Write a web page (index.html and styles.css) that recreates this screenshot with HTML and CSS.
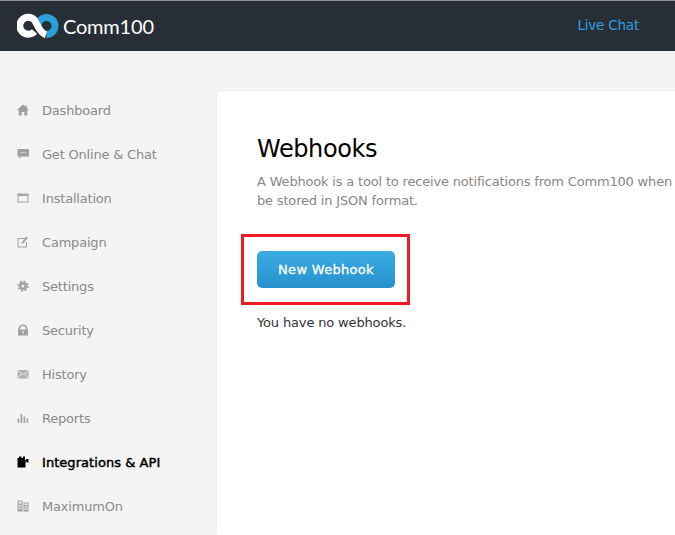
FILE: index.html
```html
<!DOCTYPE html>
<html lang="en">
<head>
<meta charset="utf-8">
<title>Webhooks</title>
<link rel="stylesheet" href="styles.css">
</head>
<body>
<header class="topbar">
  <div class="brand">
    <svg class="logo" width="42" height="26" viewBox="0 0 42 26" aria-hidden="true">
      <path d="M21 13A8.500 8.500 0 1 1 29.500 21.500" fill="none" stroke="#2a9fd8" stroke-width="7"/>
      <path d="M17.500 18.500A8.500 8.500 0 1 1 17.500 7C20 10.500 22 19.500 29 21.800" fill="none" stroke="#fff" stroke-width="7"/>
    </svg>
    <span class="wordmark">Comm100</span>
  </div>
  <a class="toplink">Live Chat</a>
</header>
<div class="layout">
  <nav class="sidebar">
    <a class="navitem"><svg class="ico" viewBox="0 0 12 12"><path d="M6 .5 0 6h1.700v5.500h3V8h2.600v3.500h3V6H12L10 4.200V1.500H8.500v1.300Z"/></svg>Dashboard</a>
    <a class="navitem"><svg class="ico" viewBox="0 0 12 12"><path d="M1 1h10.500a.5.5 0 0 1 .5.500v6.500a.5.5 0 0 1-.5.500H4.500L2.500 11V8.500H1a.5.5 0 0 1-.5-.5V1.500A.5.5 0 0 1 1 1Z"/><path d="M3.500 4h1v1h-1Zm2 0h1v1h-1Zm2 0h1v1h-1Z" fill="#f4f4f4"/></svg>Get Online &amp; Chat</a>
    <a class="navitem"><svg class="ico" viewBox="0 0 12 12"><path d="M.5 1.500h11v9H.5Zm1 2.500v5.500h9V4Z" fill-rule="evenodd"/><path d="M6 2.500h1v.6H6Zm1.800 0h1v.6h-1Zm1.800 0h1v.6h-1Z" fill="#f4f4f4"/></svg>Installation</a>
    <a class="navitem"><svg class="ico" viewBox="0 0 12 12"><path d="M.500 2h7.500v1H1.500v7.500H9V6h1v5.500H.500Z"/><path d="M4.500 8 5 6l4.500-5.500 1.500 1.200-4.500 5.500Z"/></svg>Campaign</a>
    <a class="navitem"><svg class="ico" viewBox="0 0 12 12"><path d="M6 2a4 4 0 1 0 0 8 4 4 0 0 0 0-8Zm0 2.500a1.500 1.500 0 1 1 0 3 1.500 1.500 0 0 1 0-3Z" fill-rule="evenodd"/><circle class="teeth" cx="6" cy="6" r="4.800"/></svg>Settings</a>
    <a class="navitem"><svg class="ico" viewBox="0 0 12 12"><path d="M1.500 5.500V4.500a4.500 4 0 0 1 9 0v1h.5V11.500H1V5.500Zm1.700 0h5.600V4.500a2.800 2.600 0 0 0-5.600 0Z" fill-rule="evenodd"/><path d="M5.200 7.200h1.600v1.200h-.4v1.400h-.8V8.400h-.4Z" fill="#f4f4f4"/></svg>Security</a>
    <a class="navitem"><svg class="ico soft" viewBox="0 0 12 12"><path d="M.5 2h11v8.500H.5Z"/><path d="m.8 2.600 5.200 4 5.200-4M1 10l3.300-4.300M11 10 7.700 5.700" fill="none" stroke="#f4f4f4" stroke-width=".8"/></svg>History</a>
    <a class="navitem"><svg class="ico" viewBox="0 0 12 12"><path d="M.5 6.500h1.700V11H.5Zm3-4.500h1.700v9H3.500Zm3 2.500h1.700V11H6.500Zm3 2h1.700V11H9.500Z"/></svg>Reports</a>
    <a class="navitem active"><svg class="ico" viewBox="0 0 12 12"><path d="M.5 2H2V.5h2.500V2h1.500V.5h2V4h1V3h2.500v3.500H9.500v-1h-1v6H.5Z"/></svg>Integrations &amp; API</a>
    <a class="navitem"><svg class="ico" viewBox="0 0 12 12"><path d="M.5.500h5V11.500h-5Zm1 1V3.500h3V1.500Zm0 3.200v1.700h1.200V4.700Zm1.800 0v1.700h1.200V4.700ZM1.500 7.500v1.700h1.200V7.500Zm1.800 0v1.700h1.200V7.500ZM6.500 2.500h5v9h-5Zm1 1V5h3V3.500Zm0 2.700v1.500h1.200V6.200Zm1.800 0v1.500h1.200V6.200ZM7.500 8.500v1.500h1.200V8.500Zm1.800 0v1.500h1.200V8.500Z" fill-rule="evenodd"/></svg>MaximumOn</a>
  </nav>
  <main class="panel">
    <h1 class="title">Webhooks</h1>
    <p class="intro">A Webhook is a tool to receive notifications from Comm100 when<br>be stored in JSON format.</p>
    <div class="highlight"><button class="primary">New Webhook</button></div>
    <p class="empty">You have no webhooks.</p>
  </main>
</div>
</body>
</html>
```

FILE: styles.css
```css
* { box-sizing: border-box; }
html, body { height: 100%; }
body {
  margin: 0;
  overflow: hidden;
  background: #f4f4f4;
  font-family: "DejaVu Sans", sans-serif;
  font-size: 13px;
  letter-spacing: -.2px;
}
.topbar {
  height: 51px;
  border-top: 1px solid #8f9193;
  background: #272e35;
  display: flex;
  align-items: center;
  justify-content: space-between;
  padding: 0 36px 0 17px;
}
.brand { display: flex; align-items: center; gap: 4px; }
.logo { display: block; }
.wordmark {
  color: #fff;
  font-family: Lato, sans-serif;
  font-size: 20px;
  letter-spacing: -.2px;
}
.toplink {
  color: #2f9fe0;
  font-size: 13.500px;
  margin-bottom: 2px;
  letter-spacing: -.2px;
}
.layout { display: flex; height: 484px; }
.sidebar {
  width: 217px;
  flex: none;
  padding-top: 37px;
  display: flex;
  flex-direction: column;
}
.navitem {
  height: 44px;
  display: flex;
  align-items: center;
  padding-left: 17px;
  gap: 13px;
  color: #8a8a8a;
  white-space: nowrap;
}
.ico { width: 12px; height: 12px; fill: #a0a0a0; flex: none; }
.soft { fill: #b0b0b0; }
.teeth {
  fill: none;
  stroke: #a0a0a0;
  stroke-width: 1.700;
  stroke-dasharray: 1.900 1.870;
}
.active {
  color: #000;
  -webkit-text-stroke: .45px #000;
  letter-spacing: .05px;
}
.active .ico { fill: #000; }
.panel {
  flex: 1;
  margin-top: 40px;
  background: #fff;
  border-top-left-radius: 4px;
  box-shadow: 0 0 2px rgba(0,0,0,.08);
  padding: 41px 0 0 40px;
  white-space: nowrap;
  overflow: hidden;
}
.title {
  margin: 0;
  font-size: 24px;
  font-weight: 400;
  line-height: 34px;
  color: #000;
  letter-spacing: -.4px;
}
.intro {
  margin: 6px 0 0;
  line-height: 19px;
  color: #8b8686;
  letter-spacing: -.18px;
}
.highlight {
  width: 169px;
  height: 71px;
  margin: 24px 0 0 -16px;
  border: 3px solid #ed1c24;
  display: flex;
  align-items: center;
  justify-content: center;
}
.primary {
  width: 138px;
  height: 37px;
  margin-left: 1px;
  border: 0;
  border-radius: 5px;
  background: linear-gradient(#3cabe4, #2691cd);
  color: #fff;
  font: 400 13px "DejaVu Sans", sans-serif;
  letter-spacing: .3px;
  -webkit-text-stroke: .3px #fff;
  padding: 0;
}
.empty {
  margin: 9px 0 0;
  color: #333;
  line-height: 18px;
  letter-spacing: -.15px;
}
```
